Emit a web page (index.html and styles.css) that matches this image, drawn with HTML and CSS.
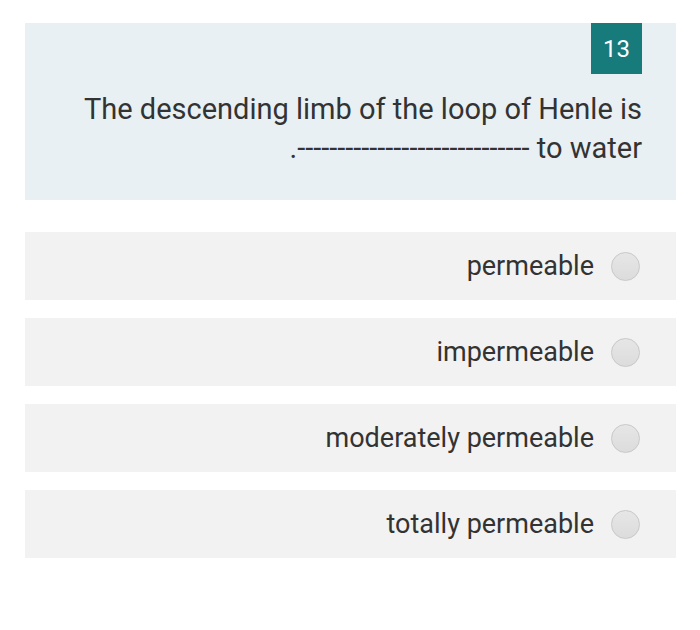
FILE: index.html
```html
<!DOCTYPE html>
<html>
<head>
<meta charset="utf-8">
<link rel="stylesheet" href="styles.css">
</head>
<body>
<div class="page">
  <div class="question">
    <div class="badge-row"><span class="badge">13</span></div>
    <p class="qtext">The descending limb of the loop of Henle is<br>.----------------------------- to water</p>
  </div>
  <div class="options">
    <div class="option"><span class="label">permeable</span><span class="radio"></span></div>
    <div class="option"><span class="label">impermeable</span><span class="radio"></span></div>
    <div class="option"><span class="label">moderately permeable</span><span class="radio"></span></div>
    <div class="option"><span class="label">totally permeable</span><span class="radio"></span></div>
  </div>
</div>
</body>
</html>
```
FILE: styles.css
```css
html, body { margin: 0; padding: 0; background: #fff; }
body { font-family: Roboto, "Noto Sans", sans-serif; color: #333; }
.page { padding: 23px 24px 0 25px; width: 651px; }
.question {
  background: #e8f0f4;
  height: 177px;
  padding: 0 34px 0 20px;
  display: flex;
  flex-direction: column;
  align-items: flex-end;
}
.badge-row { display: flex; justify-content: flex-end; }
.badge {
  width: 51px; height: 51px;
  background: #177a7b;
  color: #fff;
  font-size: 24px;
  display: flex; align-items: center; justify-content: center;
}
.qtext {
  margin: 16px 0 0 0;
  font-size: 29px;
  line-height: 39px;
  text-align: right;
  color: #333;
}
.options { display: flex; flex-direction: column; gap: 18px; margin-top: 32px; }
.option {
  background: #f2f2f2;
  height: 68px;
  display: flex;
  align-items: center;
  justify-content: flex-end;
  padding-right: 36px;
}
.label { font-size: 27px; color: #333; margin-right: 17px; }
.radio {
  width: 27px; height: 27px;
  border-radius: 50%;
  background: linear-gradient(#e6e6e6, #dcdcdc);
  border: 1px solid #c8c8c8;
}
```
